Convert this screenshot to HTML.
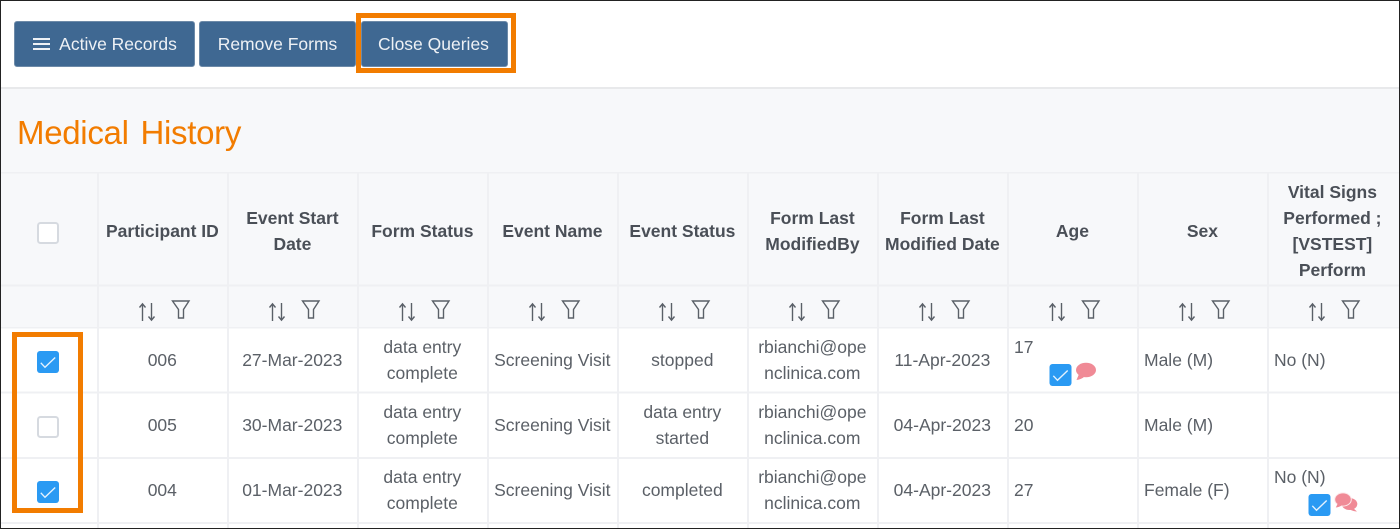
<!DOCTYPE html>
<html><head><meta charset="utf-8"><style>
html,body{margin:0;padding:0;background:#fff}
#p{position:relative;width:1400px;height:529px;overflow:hidden;background:#fff;font-family:"Liberation Sans",Arial,sans-serif;font-size:17.5px;line-height:26px;color:#5b6067}
#p div{position:absolute}
svg{position:absolute;left:0;top:0}
.b{background:#3f6892;border:1px solid #6d8aa8;box-sizing:border-box;border-radius:3px;height:46px;top:21px;color:#eef1f5;line-height:44px;text-align:center;white-space:nowrap}
.h{width:130px;text-align:center;font-weight:bold;color:#4a4f57;margin-left:-.6px}
.c{width:130px;text-align:center;white-space:nowrap;margin-left:-.7px}
.l{white-space:nowrap}
.o{border:5px solid #f27c00;box-sizing:border-box}
</style></head><body><div id="p">
<svg width="1400" height="529" viewBox="0 0 1400 529" xmlns="http://www.w3.org/2000/svg">
<defs>
<g id="s" fill="none" stroke="#5a6068" stroke-width="1.4"><path d="M3.500 21V4M.5 7.500L3.500 3.800 6.500 7.500"/><path d="M12.500 3V20M9.500 16.500L12.500 20.200 15.500 16.500"/><path d="M33.500 1H50L44.500 9.500V18H39.500V9.500Z"/></g>
<g id="k"><rect width="22" height="22" rx="3" fill="#2a9af3"/><path d="M3.800 11.800L8 16.300 18.200 6.500" fill="none" stroke="#e4f2fe" stroke-width="1.4"/></g>
<g id="u"><rect x="1" y="1" width="20" height="20" rx="2.500" fill="#fff" stroke="#d6dae0" stroke-width="2"/></g>
</defs>
<rect y="88" width="1400" height="240" fill="#f7f8fa"/>
<rect y="87" width="1400" height="2" fill="#e8e9eb"/>
<rect y="172" width="1400" height="1.500" fill="#eff0f3"/>
<rect y="284.500" width="1400" height="2" fill="#eff0f3"/>
<rect y="327" width="1400" height="1.500" fill="#eff0f3"/>
<rect y="391.500" width="1400" height="2" fill="#eff0f3"/>
<rect y="457" width="1400" height="2" fill="#eff0f3"/>
<rect y="522" width="1400" height="2" fill="#eff0f3"/>
<g fill="#eff0f3">
<rect x="97" y="172" width="2" height="357"/><rect x="227" y="172" width="2" height="357"/><rect x="357" y="172" width="2" height="357"/><rect x="487" y="172" width="2" height="357"/><rect x="617" y="172" width="2" height="357"/><rect x="747" y="172" width="2" height="357"/><rect x="877" y="172" width="2" height="357"/><rect x="1007" y="172" width="2" height="357"/><rect x="1137" y="172" width="2" height="357"/><rect x="1267" y="172" width="2" height="357"/>
</g>
<use href="#u" x="37" y="222"/><use href="#k" x="37" y="351"/><use href="#u" x="37" y="416"/><use href="#k" x="37" y="481"/>
<use href="#s" x="139" y="300"/><use href="#s" x="269" y="300"/><use href="#s" x="399" y="300"/><use href="#s" x="529" y="300"/><use href="#s" x="659" y="300"/><use href="#s" x="789" y="300"/><use href="#s" x="919" y="300"/><use href="#s" x="1049" y="300"/><use href="#s" x="1179" y="300"/><use href="#s" x="1309" y="300"/>
<use href="#k" x="1049.500" y="364"/>
<use href="#k" x="1308.500" y="494"/>
<ellipse cx="1086" cy="370" rx="10" ry="7.300" fill="#f08a96"/>
<path d="M1079 374L1076.500 380C1079.500 379.700 1082.500 378.500 1084.500 376.500Z" fill="#f08a96"/>
<ellipse cx="1349.500" cy="504" rx="7.800" ry="6" fill="#f08a96"/>
<path d="M1353 508L1357 511.500C1355 511.500 1352 510.800 1350 509.500Z" fill="#f08a96"/>
<ellipse cx="1343" cy="499.500" rx="8.300" ry="6.600" fill="#f08a96" stroke="#fde8ea" stroke-width="1"/>
<path d="M1338 503L1335.800 507.500C1338 507.300 1340.500 506.500 1342 505Z" fill="#f08a96"/>
<rect x="0" y="0" width="1400" height="1" fill="#222"/><rect x="0" y="528" width="1400" height="1" fill="#222"/><rect x="0" y="0" width="1" height="529" fill="#222"/><rect x="1399" y="0" width="1" height="529" fill="#222"/>
</svg>
<div class="b" style="left:14px;width:181px;padding-left:27px">Active Records</div>
<div class="b" style="left:199px;width:157px">Remove Forms</div>
<div class="b" style="left:361px;width:147px;padding-right:2px">Close Queries</div>
<svg width="1400" height="80" viewBox="0 0 1400 80" xmlns="http://www.w3.org/2000/svg"><g fill="#eef1f5"><rect x="33" y="38" width="17" height="2"/><rect x="33" y="43" width="17" height="2"/><rect x="33" y="48" width="17" height="2"/></g></svg>
<div class="o" style="left:356px;top:13px;width:160px;height:60px"></div>
<div class="o" style="left:12px;top:332px;width:71px;height:181px"></div>
<div style="left:17px;top:113px;font-size:33px;line-height:40px;color:#f27c00;white-space:nowrap;letter-spacing:-.3px;word-spacing:3px">Medical History</div>

<div class="h" style="left:98px;top:218px">Participant ID</div>
<div class="h" style="left:228px;top:205px">Event Start<br>Date</div>
<div class="h" style="left:358px;top:218px">Form Status</div>
<div class="h" style="left:488px;top:218px">Event Name</div>
<div class="h" style="left:618px;top:218px">Event Status</div>
<div class="h" style="left:748px;top:205px">Form Last<br>ModifiedBy</div>
<div class="h" style="left:878px;top:205px">Form Last<br>Modified Date</div>
<div class="h" style="left:1008px;top:218px">Age</div>
<div class="h" style="left:1138px;top:218px">Sex</div>
<div class="h" style="left:1268px;top:179px">Vital Signs<br>Performed ;<br>[VSTEST]<br>Perform</div>

<div class="c" style="left:98px;top:347px">006</div>
<div class="c" style="left:228px;top:347px">27-Mar-2023</div>
<div class="c" style="left:358px;top:334px">data entry<br>complete</div>
<div class="c" style="left:488px;top:347px">Screening Visit</div>
<div class="c" style="left:618px;top:347px">stopped</div>
<div class="c" style="left:748px;top:334px">rbianchi@ope<br>nclinica.com</div>
<div class="c" style="left:878px;top:347px">11-Apr-2023</div>
<div class="l" style="left:1014px;top:334px">17</div>
<div class="l" style="left:1144px;top:347px">Male (M)</div>
<div class="l" style="left:1274px;top:347px">No (N)</div>

<div class="c" style="left:98px;top:412px">005</div>
<div class="c" style="left:228px;top:412px">30-Mar-2023</div>
<div class="c" style="left:358px;top:399px">data entry<br>complete</div>
<div class="c" style="left:488px;top:412px">Screening Visit</div>
<div class="c" style="left:618px;top:399px">data entry<br>started</div>
<div class="c" style="left:748px;top:399px">rbianchi@ope<br>nclinica.com</div>
<div class="c" style="left:878px;top:412px">04-Apr-2023</div>
<div class="l" style="left:1014px;top:412px">20</div>
<div class="l" style="left:1144px;top:412px">Male (M)</div>

<div class="c" style="left:98px;top:477px">004</div>
<div class="c" style="left:228px;top:477px">01-Mar-2023</div>
<div class="c" style="left:358px;top:464px">data entry<br>complete</div>
<div class="c" style="left:488px;top:477px">Screening Visit</div>
<div class="c" style="left:618px;top:477px">completed</div>
<div class="c" style="left:748px;top:464px">rbianchi@ope<br>nclinica.com</div>
<div class="c" style="left:878px;top:477px">04-Apr-2023</div>
<div class="l" style="left:1014px;top:477px">27</div>
<div class="l" style="left:1144px;top:477px">Female (F)</div>
<div class="l" style="left:1274px;top:464px">No (N)</div>
</div></body></html>
